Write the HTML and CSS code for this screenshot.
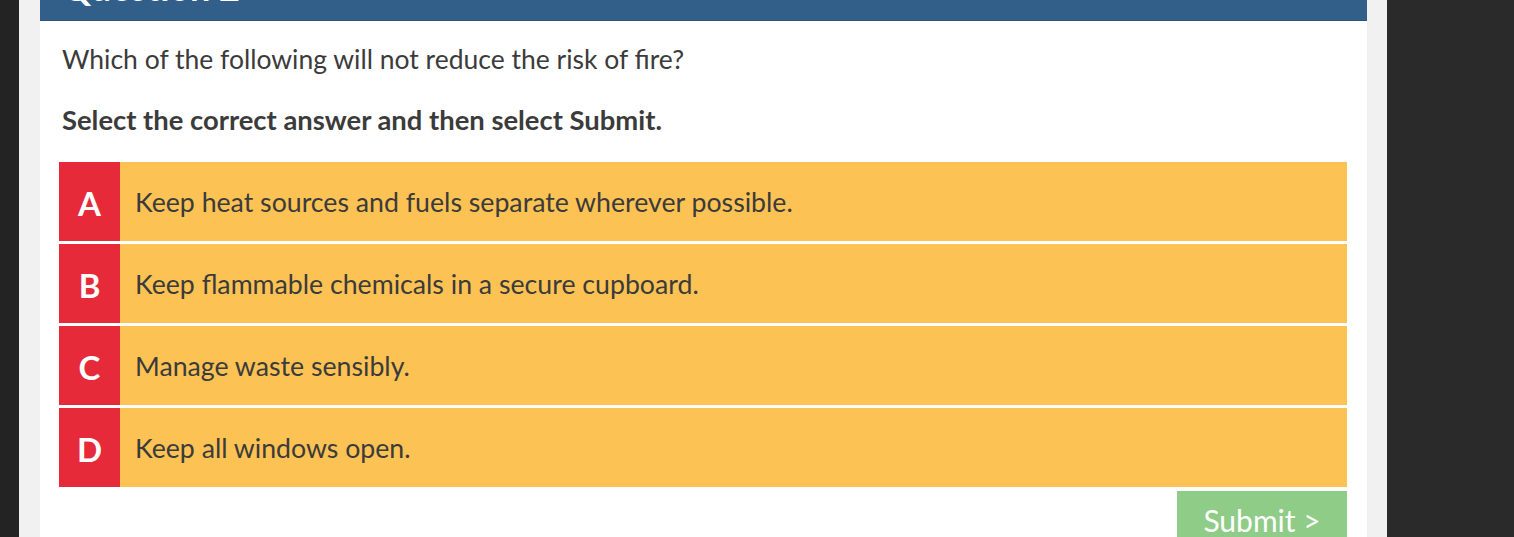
FILE: index.html
```html
<!DOCTYPE html>
<html lang="en">
<head>
  <meta charset="UTF-8" />
  <meta name="viewport" content="width=device-width, initial-scale=1.0"/>
  <title>Question 2</title>
  <link rel="stylesheet" href="styles.css">
</head>
<body>
  <div class="page">
    <div class="edge"></div>
    <div class="frame">
      <div class="panel">
        <header class="q-header">
          <h2>Question 2</h2>
        </header>

        <div class="q-body">
          <p class="q-text">Which of the following will not reduce the risk of fire?</p>
          <p class="q-instruction">Select the correct answer and then select Submit.</p>

          <ul class="options">
            <li class="option">
              <span class="letter">A</span>
              <span class="answer">Keep heat sources and fuels separate wherever possible.</span>
            </li>
            <li class="option">
              <span class="letter">B</span>
              <span class="answer">Keep flammable chemicals in a secure cupboard.</span>
            </li>
            <li class="option">
              <span class="letter">C</span>
              <span class="answer">Manage waste sensibly.</span>
            </li>
            <li class="option">
              <span class="letter">D</span>
              <span class="answer">Keep all windows open.</span>
            </li>
          </ul>

          <div class="actions">
            <button class="submit">Submit &gt;</button>
          </div>
        </div>
      </div>
    </div>
  </div>
</body>
</html>
```

FILE: styles.css
```css
* {
  box-sizing: border-box;
}

body {
  margin: 0;
  background: #2a2a2a;
  font-family: Lato, "Open Sans", sans-serif;
  color: #3b3b3b;
  height: 537px;
  overflow: hidden;
}

.page {
  display: flex;
  height: 537px;
}

.edge {
  width: 19px;
  background: #232323;
}

.frame {
  width: 1368px;
  background: #f1f1f1;
  padding: 0 20px 0 21px;
}

.panel {
  background: #ffffff;
  height: 100%;
}

.q-header {
  height: 21px;
  overflow: hidden;
  background: #315f8a;
  border-bottom: 1px solid #2b5379;
  padding-left: 22px;
}

.q-header h2 {
  margin: -31px 0 0;
  font-size: 36px;
  line-height: 1;
  font-weight: 700;
  color: #ffffff;
}

.q-body {
  padding: 0 20px 0 19px;
}

.q-text {
  margin: 0;
  padding: 22px 0 0 3px;
  font-size: 26.5px;
  line-height: 32px;
}

.q-instruction {
  margin: 0;
  padding: 29px 0 0 3px;
  font-size: 27.4px;
  line-height: 32px;
  font-weight: 700;
}

.options {
  list-style: none;
  margin: 26px 0 0;
  padding: 0;
  display: flex;
  flex-direction: column;
  gap: 3px;
}

.option {
  display: flex;
  height: 79px;
  background: #fcc254;
}

.letter {
  width: 61px;
  background: #e62a3a;
  color: #ffffff;
  font-weight: 700;
  font-size: 33px;
  display: flex;
  align-items: center;
  justify-content: center;
  padding-top: 3px;
}

.answer {
  display: flex;
  align-items: center;
  padding: 1px 0 0 15px;
  font-size: 26.7px;
}

.actions {
  display: flex;
  justify-content: flex-end;
  margin-top: 4px;
}

.submit {
  width: 170px;
  height: 60px;
  border: none;
  background: #8fcc88;
  color: #ffffff;
  font-family: Lato, "Open Sans", sans-serif;
  font-size: 30px;
  padding: 0 0 2px;
  cursor: pointer;
}
```
